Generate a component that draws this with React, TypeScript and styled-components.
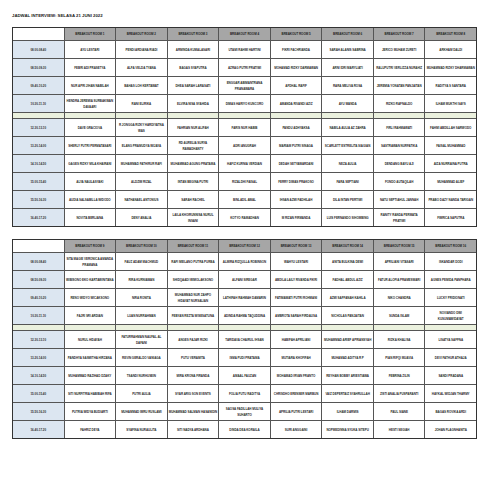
import styled, { createGlobalStyle } from "styled-components"

const GlobalStyle = createGlobalStyle`
    body {
        margin: 0;
        background: #fff;
        font-family: "Liberation Sans", Arial, sans-serif;
    }
`

const TIMES_AM = ["08.00-08.40", "08.50-09.30", "09.40-10.20", "10.30-11.10"]
const TIMES_PM = ["12.30-13.10", "13.20-14.00", "14.10-14.50", "15.00-15.40", "15.50-16.30", "16.40-17.20"]

type Block = {
    rooms: string[]
    names: string[][]
}

const blocks: Block[] = [
    {
        rooms: [1, 2, 3, 4, 5, 6, 7, 8].map((n) => `BREAKOUT ROOM ${n}`),
        names: [
            ["AYU LESTARI", "PENDI ARDIANA RIADI", "ARMINDA KUMALASARI", "UTAMI RAHMI HARTINI", "FIKRI FACHRIANDA", "SARAH ALANIS SABRINA", "JERICO MUHAM ZURETI", "ARKHAM DALDI"],
            ["FEBRI ADI PRASETYA", "ALFA VELDA TYANA", "BAGAS SYAPUTRA", "AZRAG PUTRI PRATIWI", "MOHAMAD RIZKY DARMAWAN", "ARNI IDRI MARYLIATI", "RALUPUTRI VERLIZZA NURAHIZ", "MUHAMMAD RIZKY DHARMAWAN"],
            ["NUR APRI JIHAN NABILAH", "BAHAS LOH KERTAWAT", "DHEA SARAH LARASATI", "ENGGAR ABIMANTRANA PRANAWARA", "AFDHAL RAFIF", "RARA MELIVA ROSA", "JEREMIA YONATAN PANJAITAN", "RADITYA S SANTARA"],
            ["HENDRA JEREMIA SURBAKWAN DAVAARI", "RANI ELIRIKA", "ELVIRA NISA SYAHIDA", "DIMAS HARIYO KUNCORO", "AMANDA RIVANDI AZIZ", "AYU WANDA", "RIZKO RAFNALDO", "ILHAM MUKTHI SAYS"],
            ["DAVE GRACIOVA", "R JONGGA RIZKY HARDIYATNA WAS", "FAHRIAN NUR ALIFAH", "FARIS NUR HABIB", "PANDU ADHYAKSA", "NABILA AULIA AZ ZAHRA", "FIRLI RAHMAWATI", "FAHMI ABDILLAH SARWODO"],
            ["SHERLY PUTRI PERMATASARI", "ELANG PRAMUDYA WIJAYA", "RD AURELIA SURYA RAMADHANTY", "ADRI ANUGRAH", "MARIAM PUTRI SINAGA", "SCARLETT ESTRELITA SIAGIAN", "SASTRAWAN NURFATIKA", "FAISAL MUHAMMAD"],
            ["GAGES RIZKY MILA KHAIRANI", "MUHAMMAD FATHIRUR RAFI", "MUHAMMAD AGUNG PRATAMA", "HAFIZ KURNIA VERDIAN", "DEDAH SETYAWARDANI", "NEZA AULIA", "DENDANG BAYU AJI", "AIZA NURRAINA PUTRA"],
            ["ALYA NAULASYAKI", "ALDZIM RIZAL", "INTAN BEGINA PUTRI", "RIZALDHI FAISAL", "FERRY DIMAS PRAKOSO", "FARA SEPTIANI", "FONDO AUTAQILAH", "MUHAMMAD ALIEF"],
            ["AUDIA SALSABILLA WIDODO", "NATHANAEL ANTONIUS", "SARAH RACHEL", "BINLADIL AWAL", "IHSAN AZMI FADHILAH", "DILA INTAN PERTIWI", "NATU SEPTIAHUL JANNAH", "PRABO DAZY NANDA TARIGAN"],
            ["NOVITA BERLIANA", "DENY ANALIA", "LAILA KHOIRUNNISA NURUL INSANI", "KOTYO RAMADHAN", "M RIZAN FIRMANDA", "LUIS FERNANDO SIHOMBING", "RANITY RANDA PERMATA PRATIWI", "FIMRICA SAPUTRA"],
        ],
    },
    {
        rooms: [9, 10, 11, 12, 13, 14, 15, 16].map((n) => `BREAKOUT ROOM ${n}`),
        names: [
            ["SITA MAGIE VERONICA AMANDA PRAMANA", "FAUZ ADAM MACHMUD", "RAFI MEILANO PUTRA PURBA", "ALMIRA RIZQULLA ROBINSON", "WAHYU LESTARI", "ANITA BULKINA DEWI", "APRILIANI VITASARI", "ISKANDAR DODI"],
            ["WIBISONO EKO KARTAWINITANA", "RIRA KURNIAWAN", "SHIDQAADI WIMOLAKSONO", "ALFANI SIREGAR", "ABDILA LAILY RIVANDA FIKRI", "FADHAL ABDUL AZIZ", "FATUR ALOFIA PRAMESWARI", "AGNES PEMIDA PANPHARA"],
            ["RENO WIDYO WICAKSONO", "NIRA RONITA", "MUHAMMAD NUR ZAHPO HIDAYAT NURSALIAN", "LATHIFAH RAHMAH DAMARIN", "FATIMAWATI PUTRI ROHMANI", "AZMI SAFFANAH KAHILA", "NIKO CHANDRA", "LUCKY PRIDIONATI"],
            ["FAJRI SRI ARDIAN", "LUAN NURRAHMAN", "FEBYAN REZTA WISESATUNA", "ADINDA RAHMA TAQUDDINA", "AMBROTA SARAH FIRDAUSA", "NICHOLAS PANJAITAN", "SUNDA ISLAM", "NOVIANDO DWI KUSUMAWIDAYAT"],
            ["NURUL HIDAYAH", "FATURRAHMAN NAUFAL AL DAFANI", "ANGES FAJAR RIZKI", "TARIDAVA CHAIRUL IHSAN", "HABIFAH APRILIANI", "MUHAMMAD ARIEF APRIANSYAH", "RIZKA KHALISA", "LISATYA SAFFNA"],
            ["PANDHYA SASMITHA HIRZANA", "REVIN GERALDO VANIAGA", "PUTU VERAMITA", "ISMA PUDI PRATAMA", "MUTIARA KHOFIFAH", "MUHAMAD ADITYA R P", "PIAN RIFQI MUAVIA", "DEVI FATHUR ATHAJA"],
            ["MUHAMMAD RAZIHAD DZAKY", "TSANDI NURHUSEIN", "MIRA KRONA FIRANDA", "AMAAL FAUZAN", "MOHAMAD IRVAN FRANTO", "REYHAN BOBBY ARIESTIAWA", "FEBRINA ZILIN", "SANDI PRADANA"],
            ["SITI NURFITRIA HABIBAH RIFA", "PUTRI AULIA", "SYAR ARIG SON EVENTS", "FOLIA PUTU RADITYA", "CHRISDHO ERENSER MARBUN", "VAIZ DEPERTAIZ SYAHRULLAH", "ZISTI ANALIA PUSPARANTI", "HAYKAL WIDJAN THARMY"],
            ["PUTRIA WIDYA BUDIARTI", "MUHAMMAD IMRU RUSLAMI", "MUHAMMAD SALMAN HASANIDIN", "SAOSA FADILLAH MULIYA SUHARTO", "APRILIA PUTRI LESTARI", "ILHAM DARMIS", "PAUL SIANE", "BAGAS ROVIKA ARDI"],
            ["FAHRIZ DEYA", "SYAFINA NURAULITA", "SITI NADYA ARDHANA", "DINDA DEA KORAILA", "SURI ANGGAINI", "NOPMEDINNA SYUKA SITEPU", "HESTI SEGIAH", "JOHAN FLAGNHANITA"],
        ],
    },
]

const ScheduleTable = ({ block }: { block: Block }) => {
    const am = block.names.slice(0, 4)
    const pm = block.names.slice(4)
    return (
        <Grid>
            <Corner />
            {block.rooms.map((r) => (
                <RoomHead key={r}>{r}</RoomHead>
            ))}
            {am.map((row, i) => (
                <Row key={TIMES_AM[i]} time={TIMES_AM[i]} names={row} />
            ))}
            {Array.from({ length: 9 }).map((_, i) => (
                <BreakCell key={`b${i}`} />
            ))}
            {pm.map((row, i) => (
                <Row key={TIMES_PM[i]} time={TIMES_PM[i]} names={row} />
            ))}
        </Grid>
    )
}

const Row = ({ time, names }: { time: string; names: string[] }) => (
    <>
        <TimeCell>{time}</TimeCell>
        {names.map((n, i) => (
            <NameCell key={i}>{n}</NameCell>
        ))}
    </>
)

export default function App() {
    return (
        <Page>
            <GlobalStyle />
            <Title>JADWAL INTERVIEW: SELASA 21 JUNI 2022</Title>
            <Tables>
                {blocks.map((b, i) => (
                    <ScheduleTable key={i} block={b} />
                ))}
            </Tables>
        </Page>
    )
}

const Page = styled.div`
    width: 495px;
    height: 495px;
    box-sizing: border-box;
    padding: 12px 0 0 12px;
    background: #fff;
`

const Title = styled.h1`
    margin: 0 0 8px;
    font-size: 4.3px;
    line-height: 7px;
    font-weight: 700;
    color: #222;
`

const Tables = styled.div`
    display: flex;
    flex-direction: column;
    gap: 12px;
`

const Grid = styled.div`
    display: grid;
    grid-template-columns: repeat(9, 1fr);
    grid-template-rows: 12px repeat(4, 17px) 5px repeat(6, 17px);
    gap: 1px;
    width: 465px;
    box-sizing: border-box;
    background: #555;
    border: 1px solid #333;
`

const Cell = styled.div`
    display: flex;
    align-items: center;
    justify-content: center;
    text-align: center;
    padding: 0 1px;
    overflow: hidden;
    font-size: 3px;
    font-weight: 700;
    letter-spacing: -0.04px;
    line-height: 6px;
    color: #2a2a2a;
    background: #fff;
`

const Corner = styled(Cell)``

const RoomHead = styled(Cell)`
    background: #a6a6a6;
    color: #222;
`

const TimeCell = styled(Cell)`
    background: #dce6f1;
    color: #2e2e2e;
`

const NameCell = styled(Cell)``

const BreakCell = styled(Cell)`
    background: #ebf1de;
`
